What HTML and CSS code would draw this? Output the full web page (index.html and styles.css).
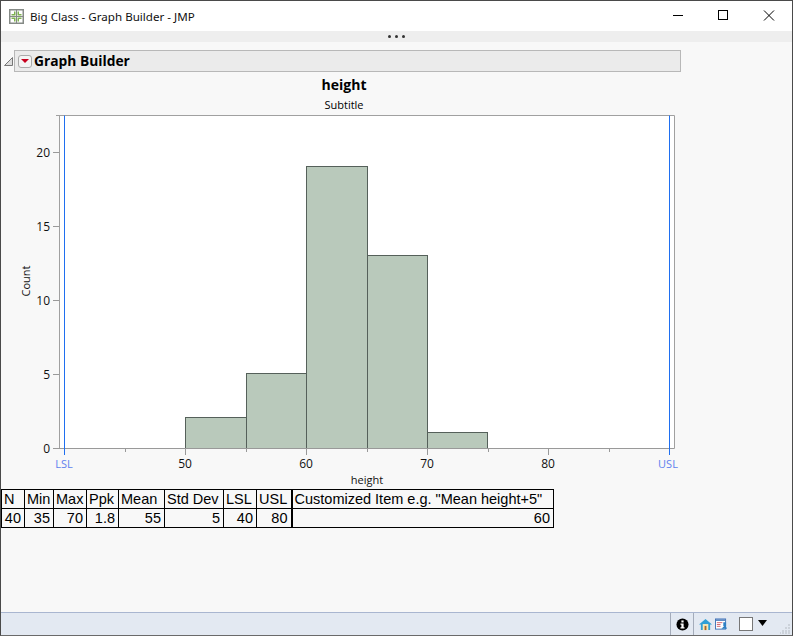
FILE: index.html
```html
<!DOCTYPE html>
<html lang="en">
<head>
<meta charset="utf-8">
<title>Big Class - Graph Builder - JMP</title>
<link rel="stylesheet" href="styles.css">
</head>
<body>
<div class="window">
  <header class="titlebar">
    <svg class="app-icon" width="15" height="15" viewBox="0 0 15 15">
      <rect x="0.75" y="0.75" width="13.5" height="13.5" fill="#fff" stroke="#858a86" stroke-width="1.5"/>
      <path d="M7.5 1v13M1 7.5h13" stroke="#858a86"/>
      <path d="M5 2.5h1.5V6.500H2.500V5H5zM8.500 2.500H10V5h2.500v1.500h-4zM2.500 8.500h4v4H5V10H2.500zM8.500 8.500h4V10H10v2.500H8.500z" fill="#7fb24f"/>
    </svg>
    <span class="window-title">Big Class - Graph Builder - JMP</span>
    <div class="window-controls">
      <svg class="ctl" width="46" height="30" viewBox="0 0 46 30"><path d="M19 14.500h10" stroke="#000" fill="none"/></svg>
      <svg class="ctl" width="46" height="30" viewBox="0 0 46 30"><rect x="18.500" y="9.500" width="9" height="9" stroke="#000" fill="none"/></svg>
      <svg class="ctl" width="46" height="30" viewBox="0 0 46 30"><path d="M18 9.500l10 10M28 9.500l-10 10" stroke="#000" fill="none"/></svg>
    </div>
  </header>
  <div class="menu-strip"><span class="dots"><i></i><i></i><i></i></span></div>
  <main class="content">
    <div class="report">
      <div class="outline">
        <svg class="disclosure" width="9" height="9" viewBox="0 0 9 9"><path d="M8.500 .5v8h-8z" fill="#dcdcdc" stroke="#777"/></svg>
        <div class="outline-head">
          <span class="red-btn"><svg width="8" height="4" viewBox="0 0 8 4"><path d="M0 0h8L4 4z" fill="#c8001e"/></svg></span>
          <span class="outline-title">Graph Builder</span>
        </div>
      </div>
      <div class="graph-title">height</div>
      <div class="graph-subtitle">Subtitle</div>
      <svg class="chart" width="680" height="375" viewBox="0 0 680 375">
        <rect x="59.500" y="1.500" width="615" height="333" fill="#fff" stroke="none"/>
        <path d="M56 1.500H674.500V334.500H59.500V1.500" fill="none" stroke="#a0a0a0"/>
        <g fill="#b9c9bb" stroke="#55605a">
          <rect x="185.500" y="303.500" width="61" height="31"/>
          <rect x="246.500" y="259.500" width="60" height="75"/>
          <rect x="306.500" y="52.500" width="61" height="282"/>
          <rect x="367.500" y="141.500" width="60" height="193"/>
          <rect x="427.500" y="318.500" width="60" height="16"/>
        </g>
        <path d="M53 334.500H674" stroke="#999" fill="none"/>
        <path d="M64.500 1.500V341M669.500 1.500V341" stroke="#1f6ff0" fill="none"/>
        <path d="M53 38.500h6M53 112.500h6M53 186.500h6M53 260.500h6M125.500 335v3M246.500 335v3M367.500 335v3M488.500 335v3M609.500 335v3M185.500 335v6M306.500 335v6M427.500 335v6M548.500 335v6" stroke="#999" fill="none"/>
        <g class="tick-label" text-anchor="end">
          <text x="50" y="43">20</text>
          <text x="50" y="117">15</text>
          <text x="50" y="191">10</text>
          <text x="50" y="265">5</text>
          <text x="50" y="339">0</text>
        </g>
        <g class="tick-label" text-anchor="middle">
          <text x="185" y="354">50</text>
          <text x="306" y="354">60</text>
          <text x="427" y="354">70</text>
          <text x="548" y="354">80</text>
          <text class="spec" x="64" y="354">LSL</text>
          <text class="spec" x="668" y="354">USL</text>
          <text class="small" x="367" y="370">height</text>
          <text class="small" transform="translate(30 167) rotate(-90)">Count</text>
        </g>
      </svg>
      <table class="stats">
        <colgroup>
          <col class="c-n"><col class="c-min"><col class="c-max"><col class="c-ppk"><col class="c-mean"><col class="c-sd"><col class="c-lsl"><col class="c-usl"><col class="c-custom">
        </colgroup>
        <thead>
          <tr><th>N</th><th>Min</th><th>Max</th><th>Ppk</th><th>Mean</th><th>Std Dev</th><th>LSL</th><th class="thick">USL</th><th>Customized Item e.g. "Mean height+5"</th></tr>
        </thead>
        <tbody>
          <tr><td>40</td><td>35</td><td>70</td><td>1.8</td><td>55</td><td>5</td><td>40</td><td class="thick">80</td><td>60</td></tr>
        </tbody>
      </table>
    </div>
  </main>
  <footer class="statusbar">
    <div class="status-cell">
      <svg width="13" height="13" viewBox="0 0 14 14"><circle cx="7" cy="7" r="6.500" fill="#000"/><rect x="5.800" y="2.600" width="2.400" height="2.200" fill="#fff"/><path d="M4.800 6h3.400v4h1v1.300H4.800V10h1V7.200h-1z" fill="#fff"/></svg>
    </div>
    <div class="status-cell icons">
      <svg width="13" height="13" viewBox="0 0 14 13"><path d="M0 6.500L7 .5l7 6h-2v6H2v-6z" fill="#2e9fd6"/><rect x="4" y="6" width="6" height="6.500" fill="#f6e8b8"/><rect x="6" y="8" width="2" height="4.500" fill="#a8662a"/></svg>
      <svg width="12" height="13" viewBox="0 0 13 13"><rect x=".5" y=".5" width="11" height="11" fill="#fff" stroke="#3b6fb5"/><path d="M1 1h10v1.500H1z" fill="#3b6fb5"/><path d="M2 4.500h6M2 6.500h4M2 8.500h4" stroke="#d0606a"/><path d="M9 4h3v4H9zM7 11l4-4 2 4z" fill="#2f7fc4"/></svg>
    </div>
    <span class="swatch"></span>
    <svg class="caret" width="9" height="6" viewBox="0 0 9 6"><path d="M0 0h9L4.500 6z" fill="#000"/></svg>
    <svg class="grip" width="11" height="11" viewBox="0 0 11 11"><path d="M8 1h2v2H8zM5 4h2v2H5zM8 4h2v2H8zM2 7h2v2H2zM5 7h2v2H5zM8 7h2v2H8zM0 9h1v2H0zM2 9h2v2H2zM5 9h2v2H5zM8 9h2v2H8z" fill="#ccd2da"/></svg>
  </footer>
</div>
</body>
</html>
```

FILE: styles.css
```css
* { box-sizing: border-box; }
html, body { margin: 0; padding: 0; height: 100%; overflow: hidden; background: #f8f8f8; }
.window {
  width: 793px;
  height: 636px;
  display: flex;
  flex-direction: column;
  border: 1px solid #4a4a4a;
  border-bottom-color: #6a6a6a;
  background: #f8f8f8;
  font-family: "Open Sans", "Noto Sans", sans-serif;
  color: #000;
}
.titlebar {
  height: 30px;
  flex: none;
  display: flex;
  align-items: center;
  background: #fff;
  padding-left: 8px;
}
.app-icon { flex: none; margin-right: 6px; }
.window-title { font-size: 11.6px; font-family: "Noto Sans", sans-serif; color: #111; white-space: nowrap; }
.window-controls { margin-left: auto; display: flex; }
.ctl { display: block; }
.menu-strip {
  height: 11px;
  flex: none;
  background: #eeeeee;
  display: flex;
  justify-content: center;
  align-items: center;
}
.dots { display: flex; gap: 4px; margin-left: -1px; }
.dots i { width: 3px; height: 3px; background: #333; display: block; border-radius: 50%; }
.content { flex: 1; min-height: 0; }
.report { width: 680px; padding-top: 8px; }
.outline { display: flex; align-items: center; padding-left: 3px; }
.disclosure { flex: none; margin-right: 1px; }
.outline-head {
  flex: 1;
  height: 22px;
  display: flex;
  align-items: center;
  gap: 2px;
  padding-left: 3px;
  background: #ebebeb;
  border: 1px solid #b8b8b8;
}
.red-btn {
  width: 14px;
  height: 13px;
  display: flex;
  align-items: center;
  justify-content: center;
  border: 1px solid #aaa;
  border-radius: 3px;
  background: #f4f4f4;
  flex: none;
}
.red-btn svg { display: block; }
.outline-title { font-size: 13.8px; font-weight: 700; line-height: 20px; }
.graph-title { margin: 3px 0 0; text-align: center; font-size: 14px; font-weight: 700; line-height: 19px; width: 686px; }
.graph-subtitle { margin-top: 3px; text-align: center; font-size: 11px; line-height: 16px; width: 686px; }
.chart { display: block; margin: 1px 0 0 -1px; }
.tick-label text { font-size: 12px; font-family: "Open Sans", sans-serif; fill: #111; }
.tick-label .small { font-size: 11px; }
.tick-label .spec { fill: #5f82ee; font-size: 11px; }
.stats {
  border-collapse: collapse;
  table-layout: fixed;
  width: 552px;
  font-family: "Liberation Sans", sans-serif;
  font-size: 14.5px;
  line-height: 17px;
}
.stats th, .stats td {
  border: 1px solid #000;
  padding: 1px 3px 0 2px;
  height: 19px;
  font-weight: 400;
  white-space: nowrap;
  overflow: hidden;
}
.stats th { text-align: left; }
.stats td { text-align: right; }
.thick { border-right-width: 2px !important; }
.c-n { width: 23px; } .c-min { width: 29px; } .c-max { width: 33px; } .c-ppk { width: 32px; }
.c-mean { width: 46px; } .c-sd { width: 59px; } .c-lsl { width: 33px; } .c-usl { width: 35px; } .c-custom { width: 262px; }
.statusbar {
  height: 23px;
  flex: none;
  display: flex;
  align-items: center;
  background: #e3e9f2;
  border-top: 1px solid #a9b6d0;
  padding-left: 669px;
  position: relative;
}
.status-cell {
  height: 22px;
  display: flex;
  align-items: center;
  gap: 3px;
  border-left: 1px solid #a4acba;
  padding-left: 5px;
  width: 23px;
  flex: none;
}
.status-cell.icons { width: 46px; }
.swatch { width: 14px; height: 14px; background: #fff; border: 1px solid #777; flex: none; }
.caret { flex: none; margin-left: 5px; margin-top: -2px; }
.grip { position: absolute; right: 1px; bottom: 1px; }
```
